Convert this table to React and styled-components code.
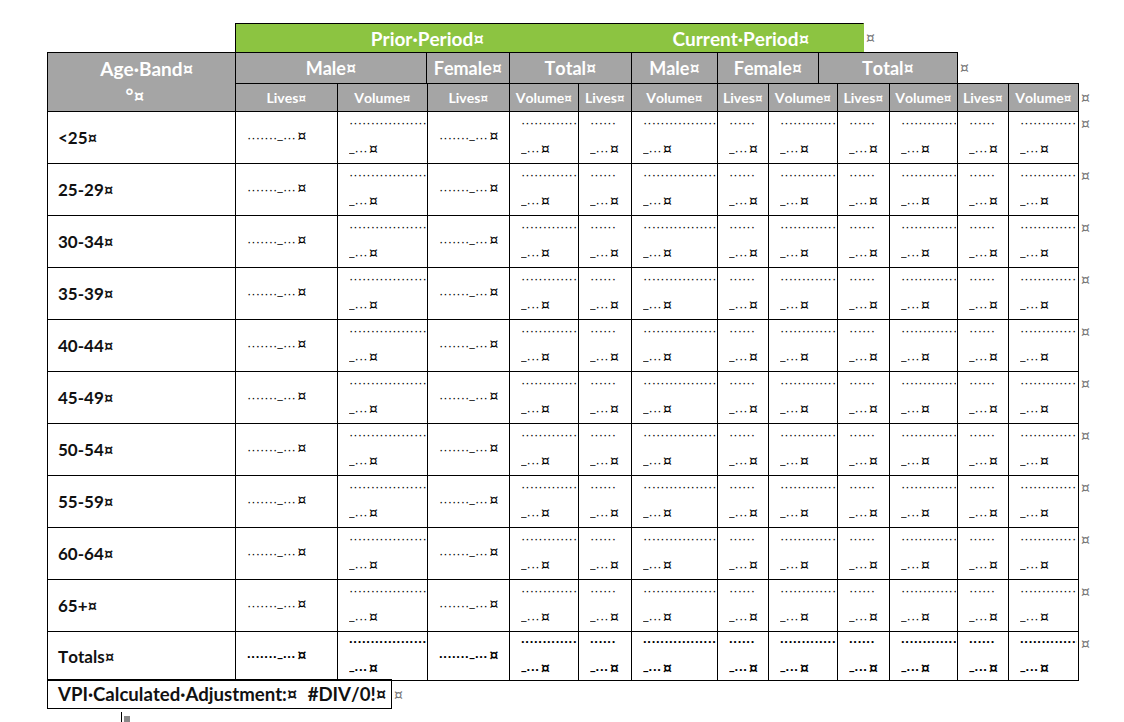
import React from 'react';
import styled, { createGlobalStyle } from 'styled-components';

const GlobalStyle = createGlobalStyle`
  body {
    margin: 0;
    background: #ffffff;
    font-family: Lato, "Liberation Sans", sans-serif;
    font-kerning: none;
  }
`;

// column edges of the body grid (page pixels)
const EDGES = [47, 235, 337, 427, 509, 578, 631, 717, 768, 837, 889, 957, 1008, 1078];
const SUB_HEADS = ['Lives', 'Volume', 'Lives', 'Volume', 'Lives', 'Volume', 'Lives', 'Volume', 'Lives', 'Volume', 'Lives', 'Volume'];
const GROUP_EDGES = [235, 426, 509, 631, 717, 818, 957];
const GROUPS = ['Male', 'Female', 'Total', 'Male', 'Female', 'Total'];
// how each data column shows its empty field
const KINDS = ['single', 'fill', 'single', 'fill', 'short', 'fill', 'short', 'fill', 'short', 'fill', 'short', 'fill'];
const BANDS = ['<25', '25-29', '30-34', '35-39', '40-44', '45-49', '50-54', '55-59', '60-64', '65+'];

const Page = styled.div`
  width: 1124px;
  height: 722px;
  box-sizing: border-box;
  padding: 23px 0 0 47px;
  overflow: hidden;
`;

const Band = styled.div`
  display: flex;
  align-items: stretch;
  margin-top: -1px;
  margin-left: ${p => p.$offset || 0}px;
  &:first-child {
    margin-top: 0;
  }
`;

const Cell = styled.div`
  box-sizing: border-box;
  flex: none;
  border: 1px solid #000;
  margin-left: -1px;
  height: ${p => p.$h}px;
  background: ${p => p.$bg || '#fff'};
  display: flex;
  align-items: center;
  justify-content: ${p => (p.$center ? 'center' : 'flex-start')};
  overflow: hidden;
  &:first-child {
    margin-left: 0;
  }
`;

const GreenBar = styled.div`
  box-sizing: border-box;
  width: 629px;
  height: 30px;
  border: 1px solid #000;
  border-right-color: #8cc441;
  background: #8cc441;
  display: flex;
`;

const Period = styled.div`
  width: ${p => p.$w}px;
  display: flex;
  align-items: center;
  justify-content: center;
  color: #fff;
  font-weight: 700;
  font-size: 19px;
`;

const HeadBlock = styled.div`
  display: flex;
  margin-top: -1px;
`;

const HeadRows = styled.div`
  display: flex;
  flex-direction: column;
  margin-left: -1px;
`;

const AgeHead = styled.div`
  box-sizing: border-box;
  width: 189px;
  height: 60px;
  border: 1px solid #000;
  border-right: none;
  background: #a5a5a5;
  color: #fff;
  font-weight: 700;
  font-size: 19px;
  display: flex;
  flex-direction: column;
  align-items: center;
  justify-content: center;
  line-height: 27px;
`;

const AgeLine = styled.span`
  margin-left: ${p => p.$shift}px;
`;

const GroupText = styled.span`
  color: #fff;
  font-weight: 700;
  font-size: 18px;
`;

const SubText = styled.span`
  color: #fff;
  font-weight: 700;
  font-size: 14px;
  white-space: nowrap;
`;

const RowMark = styled.span`
  font-family: "DejaVu Sans", sans-serif;
  font-size: 14px;
  line-height: 16px;
  color: #777;
  margin-left: 2px;
  align-self: ${p => (p.$top ? 'flex-start' : 'center')};
  margin-top: ${p => (p.$top ? 5 : 0)}px;
`;

const Label = styled.span`
  padding-left: 10px;
  font-weight: 700;
  font-size: 17px;
  color: #111;
  white-space: nowrap;
`;

const Field = styled.div`
  font-family: "Liberation Sans", sans-serif;
  font-size: 13px;
  font-weight: ${p => (p.$bold ? 700 : 400)};
  color: #000;
  width: 100%;
  padding-left: 11px;
  padding-right: 1px;
  box-sizing: border-box;
  display: flex;
  flex-direction: column;
  line-height: 26px;
`;

const FieldLine = styled.div`
  white-space: nowrap;
  overflow: hidden;
`;

const Dash = styled.span`
  font-size: 10px;
  position: relative;
  top: 1px;
`;

const CellMark = styled.span`
  font-family: Lato, sans-serif;
  font-size: 17px;
  margin-left: 1px;
`;

const VpiBox = styled.div`
  box-sizing: border-box;
  width: 345px;
  height: 30px;
  margin-top: -1px;
  border: 1px solid #000;
  display: flex;
  align-items: center;
  padding-left: 10px;
  font-weight: 700;
  font-size: 18.6px;
  color: #111;
  white-space: nowrap;
`;

const VpiValue = styled.span`
  margin-left: 10px;
`;

const Caret = styled.div`
  margin: 3px 0 0 74px;
  display: flex;
  align-items: flex-end;
  height: 10px;
`;

const CaretBar = styled.span`
  width: 1px;
  height: 10px;
  background: #000;
`;

const CaretMark = styled.span`
  width: 6px;
  height: 6px;
  margin-left: 2px;
  background: #888;
`;

const width = (edges, i) => edges[i + 1] - edges[i] + 1;

function Tail() {
  return (
    <>
      <Dash>–</Dash>···<CellMark>¤</CellMark>
    </>
  );
}

function EmptyField({ kind, bold }) {
  if (kind === 'single') {
    return (
      <Field $bold={bold}>
        <FieldLine>
          ·······<Tail />
        </FieldLine>
      </Field>
    );
  }
  return (
    <Field $bold={bold}>
      <FieldLine>{kind === 'fill' ? '·'.repeat(40) : '······'}</FieldLine>
      <FieldLine>
        <Tail />
      </FieldLine>
    </Field>
  );
}

function DataRow({ label, height, bold }) {
  return (
    <Band>
      <Cell style={{ width: width(EDGES, 0) }} $h={height}>
        <Label>{label}¤</Label>
      </Cell>
      {KINDS.map((kind, i) => (
        <Cell key={i} style={{ width: width(EDGES, i + 1) }} $h={height}>
          <EmptyField kind={kind} bold={bold} />
        </Cell>
      ))}
      <RowMark $top>¤</RowMark>
    </Band>
  );
}

export default function App() {
  return (
    <Page>
      <GlobalStyle />
      <Band $offset={188}>
        <GreenBar>
          <Period $w={383}>Prior·Period¤</Period>
          <Period $w={244}>Current·Period¤</Period>
        </GreenBar>
        <RowMark>¤</RowMark>
      </Band>
      <HeadBlock>
        <AgeHead>
          <AgeLine $shift={10}>Age·Band¤</AgeLine>
          <AgeLine $shift={-14}>°¤</AgeLine>
        </AgeHead>
        <HeadRows>
          <Band>
            {GROUPS.map((g, i) => (
              <Cell key={i} style={{ width: width(GROUP_EDGES, i) }} $h={32} $bg="#a5a5a5" $center>
                <GroupText>{g}¤</GroupText>
              </Cell>
            ))}
            <RowMark>¤</RowMark>
          </Band>
          <Band>
            {SUB_HEADS.map((s, i) => (
              <Cell key={i} style={{ width: width(EDGES, i + 1) }} $h={29} $bg="#a5a5a5" $center>
                <SubText>{s}¤</SubText>
              </Cell>
            ))}
            <RowMark>¤</RowMark>
          </Band>
        </HeadRows>
      </HeadBlock>
      {BANDS.map(b => (
        <DataRow key={b} label={b} height={53} />
      ))}
      <DataRow label="Totals" height={50} bold />
      <Band>
        <VpiBox>
          VPI·Calculated·Adjustment:¤<VpiValue>#DIV/0!¤</VpiValue>
        </VpiBox>
        <RowMark>¤</RowMark>
      </Band>
      <Caret>
        <CaretBar />
        <CaretMark />
      </Caret>
    </Page>
  );
}
